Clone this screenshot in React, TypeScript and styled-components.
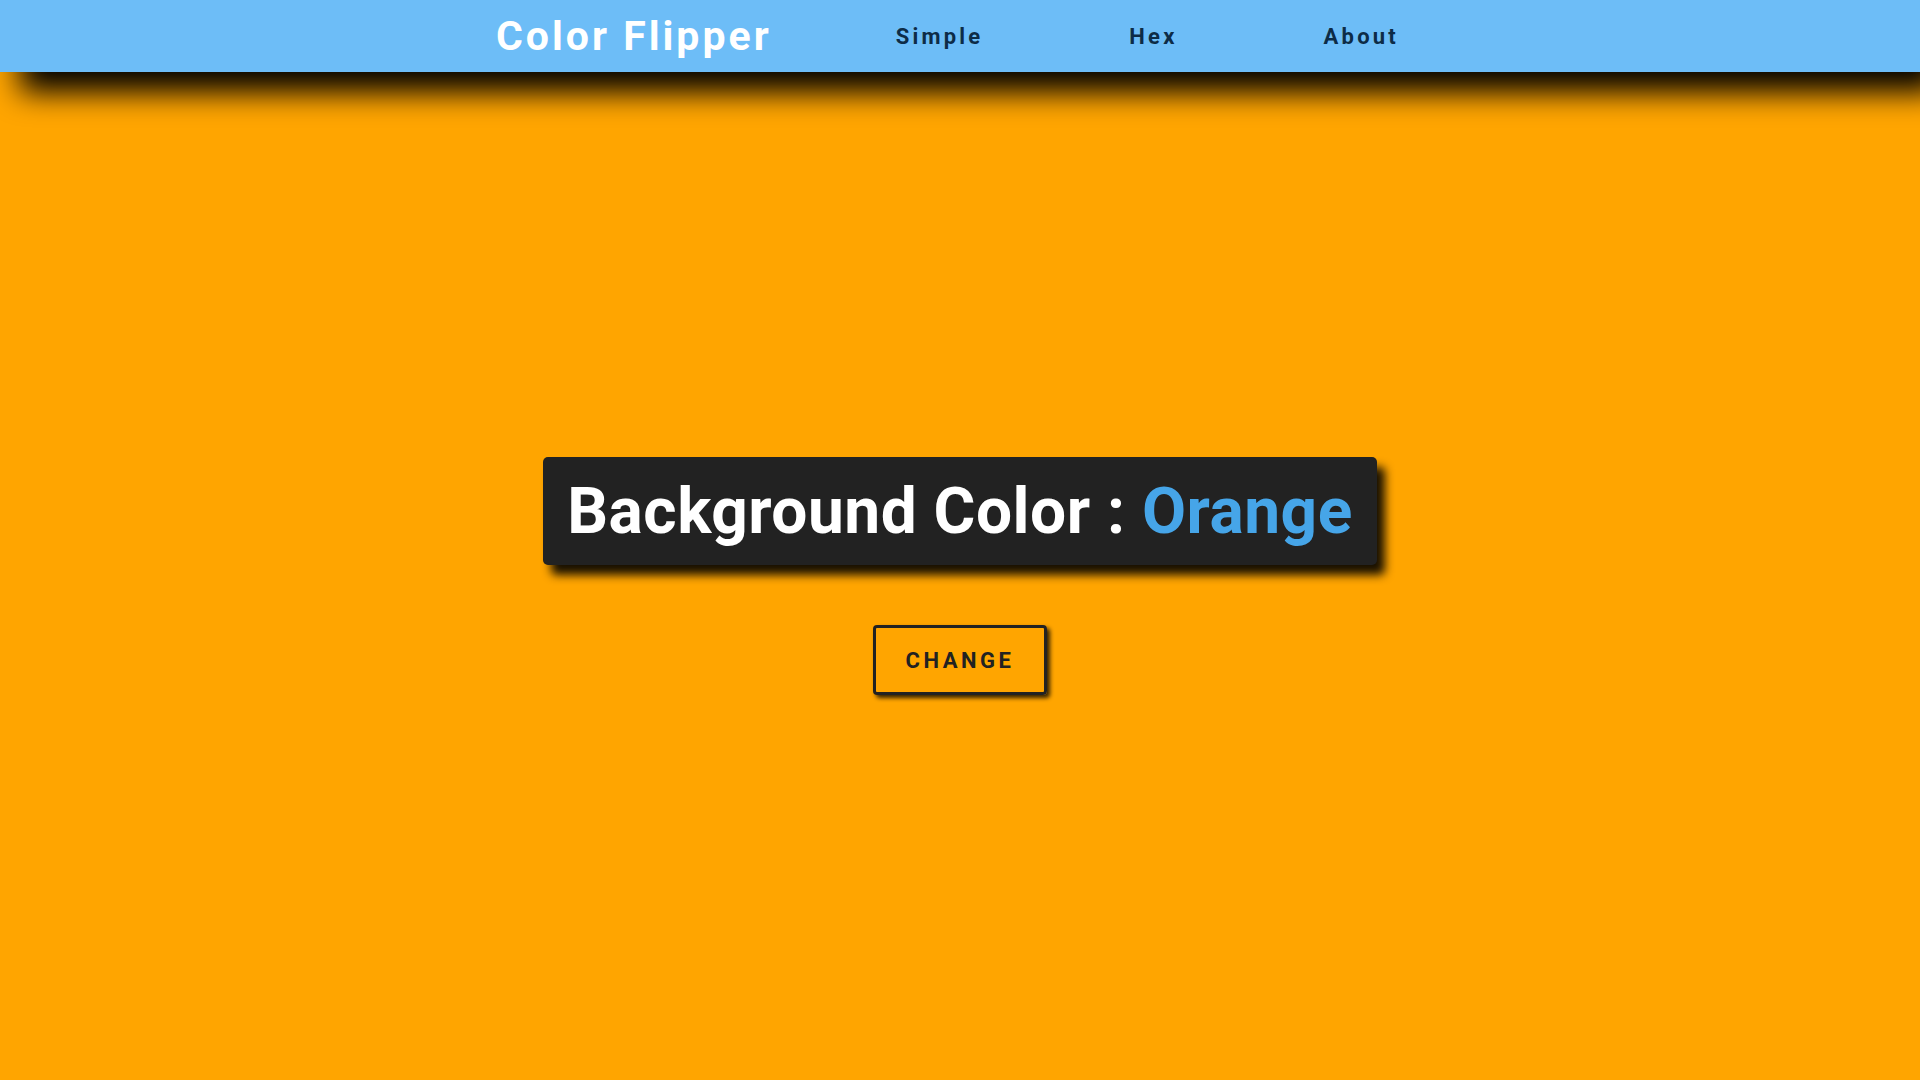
import React, { useState } from 'react';
import styled, { createGlobalStyle } from 'styled-components';

const colors = ['Orange', 'Red', 'Green', 'Purple', 'Teal', 'Crimson'];

const App: React.FC = () => {
  const [index, setIndex] = useState(0);
  const current = colors[index];

  const handleChange = () => {
    setIndex((i) => (i + 1) % colors.length);
  };

  return (
    <>
      <GlobalStyle bg={current.toLowerCase()} />
      <Nav>
        <NavInner>
          <Logo>Color Flipper</Logo>
          <NavLinks>
            <NavLink href="#">Simple</NavLink>
            <NavLink href="#">Hex</NavLink>
            <NavLink href="#">About</NavLink>
          </NavLinks>
        </NavInner>
      </Nav>
      <Main>
        <ColorCard>
          Background Color : <ColorName>{current}</ColorName>
        </ColorCard>
        <ChangeButton onClick={handleChange}>Change</ChangeButton>
      </Main>
    </>
  );
};

export default App;

const GlobalStyle = createGlobalStyle<{ bg: string }>`
  * {
    box-sizing: border-box;
  }

  body {
    margin: 0;
    font-family: 'Roboto', 'Liberation Sans', sans-serif;
    background-color: ${(p) => p.bg};
    min-height: 100vh;
  }
`;

const Nav = styled.nav`
  position: relative;
  z-index: 1;
  height: 72px;
  background-color: #6dbdf7;
  box-shadow: 20px 20px 30px #000;
`;

const NavInner = styled.div`
  width: 930px;
  height: 100%;
  margin: 0 auto;
  padding: 0 24px 0 1px;
  display: flex;
  align-items: center;
`;

const Logo = styled.h1`
  margin: 0;
  font-size: 41px;
  font-weight: 700;
  letter-spacing: 3px;
  color: #fff;
`;

const NavLinks = styled.div`
  display: flex;
  align-items: center;
  gap: 146px;
  margin-left: 124px;
`;

const NavLink = styled.a`
  font-size: 22px;
  font-weight: 700;
  letter-spacing: 3.2px;
  color: #0d2c47;
  text-decoration: none;
`;

const Main = styled.main`
  min-height: calc(100vh - 72px);
  display: flex;
  flex-direction: column;
  align-items: center;
  justify-content: center;
  gap: 60px;
`;

const ColorCard = styled.h2`
  margin: 0;
  height: 108px;
  display: flex;
  align-items: center;
  padding: 0 24px;
  background-color: #222;
  border-radius: 5px;
  box-shadow: 8px 10px 10px rgba(0, 0, 0, 0.9);
  color: #fff;
  font-size: 64px;
  font-weight: 700;
  letter-spacing: 0.5px;
  white-space: pre;
`;

const ColorName = styled.span`
  color: #46a5e8;
`;

const ChangeButton = styled.button`
  width: 174px;
  height: 70px;
  background: transparent;
  border: 3px solid #222;
  border-radius: 4px;
  box-shadow: 3px 3px 4px rgba(0, 0, 0, 0.8);
  font-family: 'Roboto', 'Liberation Sans', sans-serif;
  font-size: 22px;
  font-weight: 700;
  letter-spacing: 3.5px;
  text-transform: uppercase;
  color: #222;
  cursor: pointer;
`;
